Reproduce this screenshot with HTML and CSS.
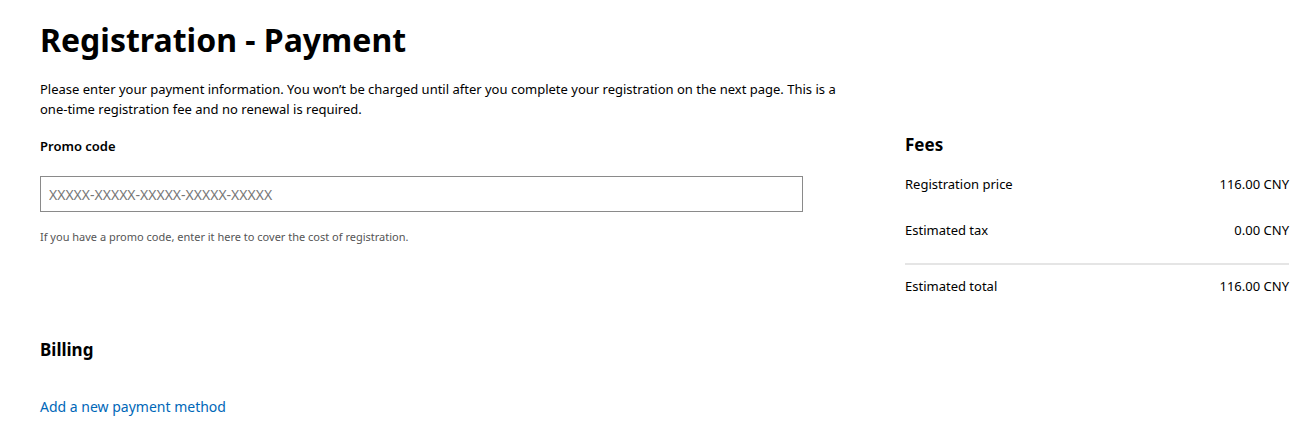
FILE: index.html
```html
<!DOCTYPE html>
<html lang="en">
<head>
<meta charset="utf-8">
<title>Registration - Payment</title>
<link rel="stylesheet" href="styles.css">
</head>
<body>
<main class="page">
  <h1 class="title">Registration - Payment</h1>
  <div class="columns">
    <section class="left">
      <p class="intro">Please enter your payment information. You won’t be charged until after you complete your registration on the next page. This is a one-time registration fee and no renewal is required.</p>
      <label class="label" for="promo">Promo code</label>
      <input id="promo" class="input" type="text" placeholder="XXXXX-XXXXX-XXXXX-XXXXX-XXXXX">
      <p class="help">If you have a promo code, enter it here to cover the cost of registration.</p>
      <h2 class="section-title billing">Billing</h2>
      <a class="link" href="#">Add a new payment method</a>
    </section>
    <aside class="right">
      <h2 class="section-title fees">Fees</h2>
      <div class="row"><span>Registration price</span><span>116.00 CNY</span></div>
      <div class="row"><span>Estimated tax</span><span>0.00 CNY</span></div>
      <hr class="divider">
      <div class="row total"><span>Estimated total</span><span>116.00 CNY</span></div>
    </aside>
  </div>
</main>
</body>
</html>
```
FILE: styles.css
```css
* { box-sizing: border-box; }
html, body { margin: 0; padding: 0; background: #fff; }
body {
  font-family: "Noto Sans", "Open Sans", sans-serif;
  color: #000;
}
.page { padding: 18px 7px 0 40px; }
.title {
  margin: 0;
  font-size: 32px;
  font-weight: 700;
  line-height: 44px;
}
.columns {
  display: flex;
  gap: 0;
}
.left {
  width: 865px;
  display: flex;
  flex-direction: column;
  align-items: flex-start;
}
.intro {
  margin: 17px 0 0;
  font-size: 13px;
  line-height: 20px;
  width: 810px;
}
.label {
  margin-top: 17px;
  font-size: 13px;
  font-weight: 600;
  line-height: 20px;
}
.input {
  margin-top: 20px;
  width: 763px;
  height: 36px;
  border: 1px solid #8a8a8a;
  padding: 0 8px;
  font-family: inherit;
  font-size: 14px;
  color: #000;
  outline: none;
}
.input::placeholder { color: #777; }
.help {
  margin: 17px 0 0;
  font-size: 11px;
  line-height: 16px;
  color: #555;
}
.section-title {
  margin: 0;
  font-size: 17px;
  font-weight: 700;
  line-height: 24px;
}
.billing { margin-top: 93px; }
.link {
  margin-top: 35px;
  font-size: 14px;
  line-height: 20px;
  color: #0067b8;
  text-decoration: none;
}
.right {
  flex: 0 0 384px;
}
.fees { margin-top: 71px; }
.row {
  display: flex;
  justify-content: space-between;
  font-size: 13px;
  line-height: 20px;
  margin-top: 17px;
}
.row + .row { margin-top: 26px; }
.divider {
  border: 0;
  border-top: 2px solid #e5e5e5;
  margin: 23px 0 0;
}
.total { margin-top: 11px; }
```
